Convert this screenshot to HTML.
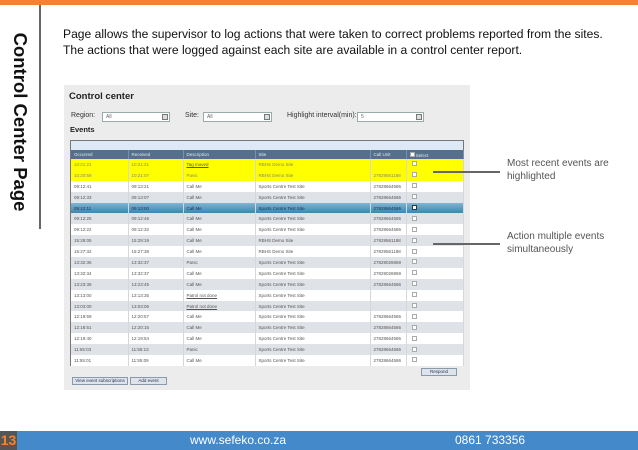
<!DOCTYPE html><html><head><style>
*{margin:0;padding:0;box-sizing:border-box}
body{width:638px;height:450px;position:relative;background:#fff;font-family:"Liberation Sans",sans-serif;overflow:hidden}
.a{position:absolute}
.p{font-size:12.1px;color:#111;left:63px;white-space:nowrap}
.dd{position:absolute;height:10px;top:112px;background:#fff;border:1px solid #9aa;font-size:5px;color:#666;padding-left:3px;line-height:8px}
.dd i{position:absolute;right:1px;top:1px;width:6px;height:6px;border:1px solid #777;background:#ddd}
.lbl{position:absolute;top:112px;font-size:7px;color:#333}
table{position:absolute;left:71px;top:150px;width:392px;border-collapse:collapse;font-size:4.5px;color:#555;table-layout:fixed}
td{height:10.9px;padding-left:3px;border-right:1px solid #d4d8dc;white-space:nowrap;overflow:hidden}
tr.h td{height:9px;background:#56708c;color:#dfe6ee;border-right:1px solid #7890a8}
tr.y td{background:#ffff00;color:#886}
tr.g td{background:#dfe2e6}
tr.w td{background:#fff}
tr.s td{background:linear-gradient(#7fb5d4,#3f86ad);color:#234}
.cb{display:inline-block;width:5px;height:5px;border:1px solid #aaa;background:#fff;margin-left:2px}
u{color:#555}
.co{font-size:10px;color:#555;line-height:13px}
.btn{position:absolute;height:8px;border:1px solid #8a9aaa;background:#dde4ec;font-size:4.5px;color:#335;line-height:6px;text-align:center}
</style></head><body>
<div class="a" style="left:0;top:0;width:638px;height:5px;background:#f58232"></div>
<div class="a" style="left:39px;top:5px;width:2px;height:224px;background:#666"></div>
<div class="a" style="left:20px;top:122px;transform:translate(-50%,-50%) rotate(90deg);font-weight:bold;font-size:18.5px;white-space:nowrap;color:#111">Control Center Page</div>
<div class="a p" style="top:27px">Page allows the supervisor to log actions that were taken to correct problems reported from the sites.</div>
<div class="a p" style="top:43px">The actions that were logged against each site are available in a control center report.</div>

<div class="a" style="left:64px;top:85px;width:406px;height:305px;background:#ececec"></div>
<div class="a" style="left:69px;top:91px;font-weight:bold;font-size:9.5px;color:#222">Control center</div>
<div class="lbl" style="left:71px">Region:</div><div class="dd" style="left:102px;width:68px">All<i></i></div>
<div class="lbl" style="left:185px">Site:</div><div class="dd" style="left:203px;width:69px">All<i></i></div>
<div class="lbl" style="left:287px">Highlight interval(min):</div><div class="dd" style="left:357px;width:67px">5<i></i></div>
<div class="a" style="left:70px;top:125px;font-weight:bold;font-size:7.5px;color:#222">Events</div>
<div class="a" style="left:70px;top:140px;width:394px;height:226px;border:1px solid #777;background:#fff"></div>
<div class="a" style="left:71px;top:141px;width:392px;height:9px;background:#dde9f6"></div>
<table>
<colgroup><col style="width:57px"><col style="width:55px"><col style="width:72px"><col style="width:115px"><col style="width:36px"><col style="width:57px"></colgroup>
<tr class="h"><td>Occurred</td><td>Received</td><td>Description</td><td>Site</td><td>Call Unit</td><td><span class="cb" style="margin:0"></span> Select</td></tr>
<tr class="y"><td>10:21:21</td><td>10:21:21</td><td><u>Tag moved</u></td><td>RBHS Demo Site</td><td></td><td><span class="cb"></span></td></tr>
<tr class="y"><td>10:20:59</td><td>10:21:07</td><td>Panic</td><td>RBHS Demo Site</td><td>27829561188</td><td><span class="cb"></span></td></tr>
<tr class="w"><td>09:12:41</td><td>09:13:21</td><td>Call Me</td><td>Sports Centre Test Site</td><td>27828664586</td><td><span class="cb"></span></td></tr>
<tr class="g"><td>09:12:33</td><td>09:13:07</td><td>Call Me</td><td>Sports Centre Test Site</td><td>27828664586</td><td><span class="cb"></span></td></tr>
<tr class="s"><td>09:12:11</td><td>09:13:00</td><td>Call Me</td><td>Sports Centre Test Site</td><td>27828664586</td><td><span class="cb" style="border-color:#333"></span></td></tr>
<tr class="g"><td>09:12:25</td><td>09:12:46</td><td>Call Me</td><td>Sports Centre Test Site</td><td>27828664586</td><td><span class="cb"></span></td></tr>
<tr class="w"><td>09:12:22</td><td>09:12:32</td><td>Call Me</td><td>Sports Centre Test Site</td><td>27828664586</td><td><span class="cb"></span></td></tr>
<tr class="g"><td>15:28:05</td><td>15:29:19</td><td>Call Me</td><td>RBHS Demo Site</td><td>27829561188</td><td><span class="cb"></span></td></tr>
<tr class="w"><td>15:27:32</td><td>15:27:38</td><td>Call Me</td><td>RBHS Demo Site</td><td>27829561188</td><td><span class="cb"></span></td></tr>
<tr class="g"><td>13:32:36</td><td>13:32:37</td><td>Panic</td><td>Sports Centre Test Site</td><td>27829026969</td><td><span class="cb"></span></td></tr>
<tr class="w"><td>13:32:34</td><td>13:32:37</td><td>Call Me</td><td>Sports Centre Test Site</td><td>27829026969</td><td><span class="cb"></span></td></tr>
<tr class="g"><td>13:23:39</td><td>13:23:45</td><td>Call Me</td><td>Sports Centre Test Site</td><td>27828664586</td><td><span class="cb"></span></td></tr>
<tr class="w"><td>13:13:00</td><td>13:13:35</td><td><u>Patrol not done</u></td><td>Sports Centre Test Site</td><td></td><td><span class="cb"></span></td></tr>
<tr class="g"><td>13:03:00</td><td>13:03:06</td><td><u>Patrol not done</u></td><td>Sports Centre Test Site</td><td></td><td><span class="cb"></span></td></tr>
<tr class="w"><td>12:19:59</td><td>12:20:57</td><td>Call Me</td><td>Sports Centre Test Site</td><td>27828664586</td><td><span class="cb"></span></td></tr>
<tr class="g"><td>12:18:51</td><td>12:20:15</td><td>Call Me</td><td>Sports Centre Test Site</td><td>27828664586</td><td><span class="cb"></span></td></tr>
<tr class="w"><td>12:19:40</td><td>12:19:54</td><td>Call Me</td><td>Sports Centre Test Site</td><td>27828664586</td><td><span class="cb"></span></td></tr>
<tr class="g"><td>11:55:03</td><td>11:55:13</td><td>Panic</td><td>Sports Centre Test Site</td><td>27828664586</td><td><span class="cb"></span></td></tr>
<tr class="w"><td>11:55:01</td><td>11:55:09</td><td>Call Me</td><td>Sports Centre Test Site</td><td>27828664586</td><td><span class="cb"></span></td></tr>
</table>
<div class="btn" style="left:421px;top:368px;width:36px">Respond</div>
<div class="btn" style="left:72px;top:377px;width:56px">View event subscriptions</div>
<div class="btn" style="left:130px;top:377px;width:37px">Add event</div>

<div class="a" style="left:433px;top:171px;width:67px;height:1.5px;background:#666"></div>
<div class="a co" style="left:507px;top:157px">Most recent events are<br>highlighted</div>
<div class="a" style="left:433px;top:243px;width:67px;height:1.5px;background:#666"></div>
<div class="a co" style="left:507px;top:230px">Action multiple events<br>simultaneously</div>

<div class="a" style="left:0;top:431px;width:638px;height:19px;background:#448acb"></div>
<div class="a" style="left:0;top:431px;width:17px;height:19px;background:#555;color:#f58232;font-weight:bold;font-size:14px;line-height:19px;text-align:center">13</div>
<div class="a" style="left:190px;top:431px;font-size:12px;line-height:19px;color:#fff">www.sefeko.co.za</div>
<div class="a" style="left:455px;top:431px;font-size:12px;line-height:19px;color:#fff">0861 733356</div>
</body></html>
